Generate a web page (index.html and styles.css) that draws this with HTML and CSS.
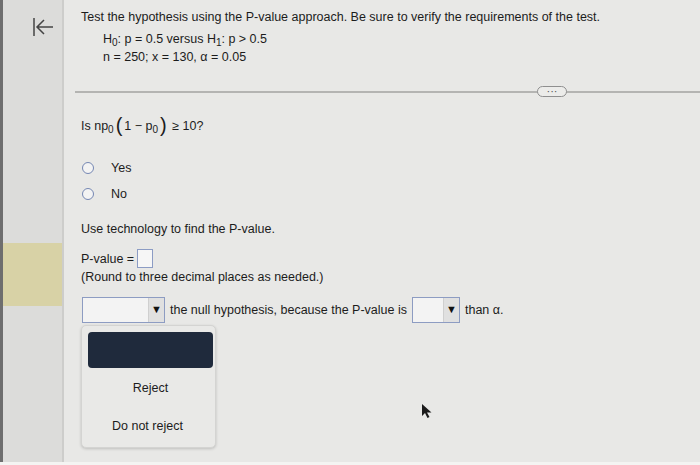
FILE: index.html
```html
<!DOCTYPE html>
<html>
<head>
<meta charset="utf-8">
<link rel="stylesheet" href="styles.css">
</head>
<body>
<div class="screen">
  <aside class="sidebar">
    <div class="back">
      <svg width="22" height="20" viewBox="0 0 22 20"><path d="M2 1v18M21 10H5M12 3l-7 7 7 7" fill="none" stroke="#444" stroke-width="1.5"/></svg>
    </div>
    <div class="mark"></div>
  </aside>
  <main class="content">
    <p class="intro">Test the hypothesis using the P-value approach. Be sure to verify the requirements of the test.</p>
    <div class="given">
      <div>H<sub>0</sub>: p = 0.5 versus H<sub>1</sub>: p &gt; 0.5</div>
      <div>n = 250; x = 130, α = 0.05</div>
    </div>
    <div class="rule"><span class="more">···</span></div>
    <p class="question">Is np<sub>0</sub><span class="paren">(</span>1 − p<sub>0</sub><span class="paren">)</span> ≥ 10?</p>
    <div class="options">
      <label class="opt"><span class="radio"></span>Yes</label>
      <label class="opt"><span class="radio"></span>No</label>
    </div>
    <p class="tech">Use technology to find the P-value.</p>
    <p class="pval">P-value = <span class="input"></span></p>
    <p class="round">(Round to three decimal places as needed.)</p>
    <div class="concl">
      <span class="select wide"><span class="arrow">▼</span></span>
      <span class="txt">the null hypothesis, because the P-value is</span>
      <span class="select narrow"><span class="arrow">▼</span></span>
      <span class="txt">than α.</span>
      <div class="menu">
        <div class="item sel"></div>
        <div class="item">Reject</div>
        <div class="item left">Do not reject</div>
      </div>
    </div>
    <svg class="cursor" width="12" height="16" viewBox="0 0 12 16"><path d="M1 1l0 12 3-3 2.5 5 2-1-2.5-4.5h4.5z" fill="#1b1b1b"/></svg>
  </main>
</div>
</body>
</html>
```
FILE: styles.css
```css
html, body {
  margin: 0;
  padding: 0;
  background: #f4f4f2;
}
body {
  font-family: "Liberation Sans", Arial, sans-serif;
  color: #1c1c1c;
  width: 700px;
  height: 465px;
  overflow: hidden;
}
.screen {
  display: flex;
  height: 462px;
  background: #e8e8e6;
}
.sidebar {
  width: 59px;
  border-left: 3px solid #6e6e6e;
  border-right: 2px solid #cdcdcb;
  background: #dcdcda;
  display: flex;
  flex-direction: column;
}
.back {
  padding: 17px 0 0 29px;
  height: 23px;
}
.mark {
  margin-top: 203px;
  height: 63px;
  background: #d8d2a6;
}
.content {
  flex: 1;
  position: relative;
  padding: 9px 0 0 17px;
  font-size: 12.5px;
}
p { margin: 0; }
sub {
  font-size: 10px;
  vertical-align: -3px;
  line-height: 0;
}
.intro {
  line-height: 17px;
}
.given {
  padding-left: 22px;
  margin-top: 4px;
  line-height: 18px;
}
.rule {
  margin: 25px 0 0 -6px;
  height: 2px;
  background: #b4b4b2;
  position: relative;
}
.more {
  position: absolute;
  left: 462px;
  top: -5px;
  width: 28px;
  height: 9px;
  border: 1px solid #8f8f8f;
  border-radius: 6px;
  background: #ececea;
  font-size: 11px;
  line-height: 8px;
  text-align: center;
  color: #555;
}
.question {
  margin-top: 23px;
  line-height: 20px;
}
.paren {
  font-size: 20px;
  font-weight: 300;
  vertical-align: -2px;
  margin: 0 2px;
  line-height: 0;
}
.options {
  margin-top: 24px;
  display: flex;
  flex-direction: column;
  gap: 10px;
}
.opt {
  display: flex;
  align-items: center;
  height: 16px;
  padding-left: 1px;
}
.radio {
  width: 10px;
  height: 10px;
  border: 1.5px solid #7587b3;
  border-radius: 50%;
  background: #f3f3f3;
  margin-right: 17px;
}
.tech {
  margin-top: 18px;
  line-height: 18px;
}
.pval {
  margin-top: 11px;
  line-height: 18px;
  display: flex;
  align-items: center;
}
.input {
  display: inline-block;
  width: 14px;
  height: 17px;
  border: 1px solid #8c9cc4;
  background: #f6f6f6;
  margin-left: 3px;
}
.round {
  line-height: 18px;
}
.concl {
  margin-top: 11px;
  display: flex;
  align-items: center;
  position: relative;
  height: 26px;
}
.select {
  display: inline-flex;
  justify-content: flex-end;
  height: 26px;
  border: 1px solid #8d9cc2;
  background: #f3f3f3;
  box-sizing: border-box;
}
.select.wide { width: 83px; margin-left: 1px; }
.select.narrow { width: 48px; }
.arrow {
  width: 15px;
  background: #e0e0e0;
  border-left: 1px solid #cfcfcf;
  font-size: 11px;
  line-height: 22px;
  text-align: center;
  color: #111;
}
.txt {
  margin: 0 5px;
}
.menu {
  position: absolute;
  left: 0;
  top: 28px;
  width: 135px;
  height: 123px;
  background: #e9e9e7;
  border: 1px solid #d4d4d2;
  border-radius: 5px;
  box-shadow: 0 1px 3px rgba(0,0,0,0.18);
  box-sizing: border-box;
  padding: 6px 2px 0 6px;
}
.item {
  height: 38px;
  line-height: 30px;
  text-align: center;
}
.item.sel {
  height: 36px;
  background: #1f2a3c;
  border-radius: 4px;
  margin-bottom: 5px;
}
.item.left {
  text-align: left;
  padding-left: 24px;
}
.cursor {
  position: absolute;
  left: 357px;
  top: 403px;
}
```
